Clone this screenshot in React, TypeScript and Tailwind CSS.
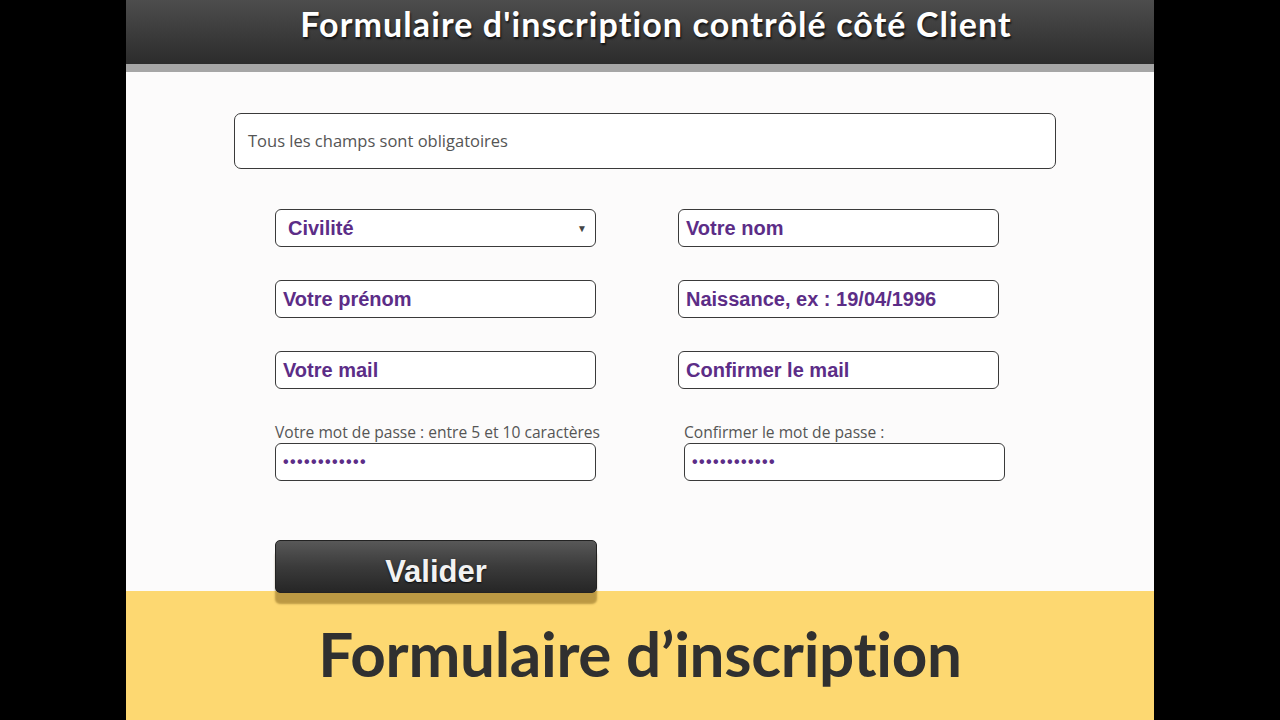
import React from "react";

const purple = "text-[#5c2d87]";

function Field({ text, select }: { text: string; select?: boolean }) {
  return (
    <div className="flex h-[38px] items-center justify-between rounded-[6px] border-[1.5px] border-[#3a3a3a] bg-white pl-[7px] pr-[8px]">
      <span className={`${purple} ${select ? "pl-[5px]" : ""} font-['Liberation_Sans',Arial,sans-serif] text-[20px] font-bold leading-none`}>
        {text}
      </span>
      {select && <span className="text-[10px] leading-none text-[#444]">▼</span>}
    </div>
  );
}

function PasswordField({ label }: { label: string }) {
  return (
    <div className="flex flex-col">
      <span className="whitespace-nowrap font-['Open_Sans',sans-serif] text-[15.6px] leading-[21px] text-[#555]">{label}</span>
      <div className="flex h-[38px] items-center rounded-[6px] border-[1.5px] border-[#3a3a3a] bg-white pl-[7px]">
        <span className={`${purple} font-['Liberation_Sans',Arial,sans-serif] text-[16px] font-bold leading-none tracking-[1.4px]`}>
          ••••••••••••
        </span>
      </div>
    </div>
  );
}

export default function App() {
  return (
    <div className="flex h-[720px] w-[1280px] bg-black">
      <div className="w-[126px]" />
      <div className="flex w-[1028px] flex-col">
        {/* En-tête */}
        <div className="flex h-[64px] shrink-0 items-center justify-center bg-gradient-to-b from-[#4d4d4d] to-[#2c2c2c] pb-[18px] pl-[32px]">
          <h1 className="font-['Lato',sans-serif] text-[34px] font-bold tracking-[1.1px] text-white [text-shadow:1px_2px_2px_rgba(0,0,0,0.7)]">
            Formulaire d'inscription contrôlé côté Client
          </h1>
        </div>
        <div className="h-[8px] shrink-0 bg-[#a6a6a6]" />

        {/* Formulaire */}
        <div className="relative z-10 flex h-[519px] shrink-0 flex-col bg-[#fcfbfb] pt-[41px]">
          <div className="ml-[108px] flex h-[56px] w-[822px] shrink-0 items-center rounded-[7px] border-[1.5px] border-[#3a3a3a] bg-white px-[13px]">
            <span className="font-['Open_Sans',sans-serif] text-[16.5px] text-[#555]">Tous les champs sont obligatoires</span>
          </div>

          <div className="ml-[149px] mt-[40px] grid w-[724px] shrink-0 grid-cols-[321px_321px] gap-x-[82px] gap-y-[33px]">
            <Field text="Civilité" select />
            <Field text="Votre nom" />
            <Field text="Votre prénom" />
            <Field text="Naissance, ex : 19/04/1996" />
            <Field text="Votre mail" />
            <Field text="Confirmer le mail" />
          </div>

          <div className="ml-[149px] mt-[33px] grid w-[730px] shrink-0 grid-cols-[321px_321px] gap-x-[88px]">
            <PasswordField label="Votre mot de passe : entre 5 et 10 caractères" />
            <PasswordField label="Confirmer le mot de passe :" />
          </div>

          <button className="ml-[149px] mt-[59px] flex h-[53px] w-[322px] shrink-0 items-center justify-center rounded-[5px] border border-[#222] bg-gradient-to-b from-[#585858] via-[#3b3b3b] to-[#262626] pt-[9px] shadow-[0_11px_2px_rgba(90,60,0,0.4)]">
            <span className="font-['Liberation_Sans',Arial,sans-serif] text-[31px] font-bold leading-none text-[#f2f2f2] [text-shadow:0_1px_2px_rgba(0,0,0,0.8)]">
              Valider
            </span>
          </button>
        </div>

        {/* Bandeau */}
        <div className="flex h-[129px] shrink-0 items-center justify-center bg-[#fdd871] pb-[4px]">
          <span className="font-['Lato',sans-serif] text-[62px] font-bold tracking-[-0.3px] text-[#303030]">
            Formulaire d’inscription
          </span>
        </div>
      </div>
      <div className="w-[126px]" />
    </div>
  );
}
